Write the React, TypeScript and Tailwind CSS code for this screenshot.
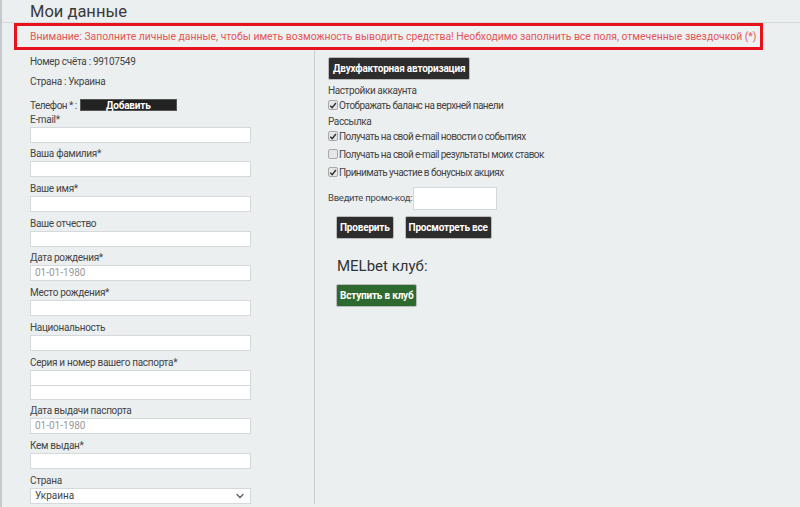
import React from 'react';

function Check({ on }: { on: boolean }) {
  return (
    <span className="mr-[1px] inline-flex h-[10px] w-[10px] shrink-0 items-center justify-center rounded-[2px] border border-[#a9a9a9] bg-[#e6e6e6]">
      {on && (
        <svg viewBox="0 0 10 10" className="h-[9px] w-[9px]">
          <path d="M1.5 5.2 L4 7.6 L8.6 1.8" fill="none" stroke="#333" strokeWidth="1.8" />
        </svg>
      )}
    </span>
  );
}

function Field({ label, placeholder, double }: { label: string; placeholder?: string; double?: boolean }) {
  return (
    <div className="mt-[4.7px]">
      <div className="h-[14px] text-[10px] leading-[14px] tracking-[-0.3px] text-[#444]">{label}</div>
      <div className="h-[16px] w-[221px] border border-[#d6d9db] bg-white pl-[4px] text-[10px] leading-[14px] text-[#999]">
        {placeholder}
      </div>
      {double && <div className="h-[14px] w-[221px] border border-t-0 border-[#d6d9db] bg-white" />}
    </div>
  );
}

function DarkBtn({ children, className }: { children: React.ReactNode; className?: string }) {
  return (
    <div className={`flex h-[23px] items-center rounded-[2px] border border-[#bbb] bg-[#2d2d2d] px-[3px] text-[10px] font-bold tracking-[-0.2px] text-white ${className ?? ''}`}>
      {children}
    </div>
  );
}

const row = 'flex h-[14px] items-center text-[10px] tracking-[-0.55px] text-[#444]';

export default function App() {
  return (
    <div className="h-[507px] w-[800px] overflow-hidden border-l-2 border-[#c3c9cd] bg-[#ebeff0] font-['Roboto','Liberation_Sans',sans-serif]">
      <div className="h-[23px] border-b border-[#d5d9dc] pl-[28px] pt-[1px] text-[16.5px] leading-[22px] text-[#3a3a3a]">Мои данные</div>
      <div className="ml-[12px] flex h-[27px] w-[749px] items-center whitespace-nowrap border-[3px] border-[#e8121c] bg-[#eef1f2] pl-[13px] text-[10.4px] text-[#e25757]">
        Внимание: Заполните личные данные, чтобы иметь возможность выводить средства! Необходимо заполнить все поля, отмеченные звездочкой (*)
      </div>
      <div className="flex">
        <div className="w-[313px] border-r border-[#c8cdd0] pl-[28px] pt-[5px]">
          <div className="h-[14px] text-[10px] leading-[14px] tracking-[-0.3px] text-[#444]">Номер счёта : 99107549</div>
          <div className="mt-[6px] h-[14px] text-[10px] leading-[14px] tracking-[-0.3px] text-[#444]">Страна : Украина</div>
          <div className="mt-[9px] flex h-[14px] items-center text-[10px] tracking-[-0.5px] text-[#444]">
            <span>Телефон * :</span>
            <span className="ml-[3px] flex h-[12px] w-[97px] items-center justify-center border border-[#555] bg-[#222] text-[10px] font-bold tracking-[-0.2px] text-white">
              Добавить
            </span>
          </div>
          <div className="-mt-[4px]">
            <Field label="E-mail*" />
          </div>
          <Field label="Ваша фамилия*" />
          <Field label="Ваше имя*" />
          <Field label="Ваше отчество" />
          <Field label="Дата рождения*" placeholder="01-01-1980" />
          <Field label="Место рождения*" />
          <Field label="Национальность" />
          <Field label="Серия и номер вашего паспорта*" double />
          <Field label="Дата выдачи паспорта" placeholder="01-01-1980" />
          <Field label="Кем выдан*" />
          <div className="mt-[4.7px]">
            <div className="h-[14px] text-[10px] leading-[14px] tracking-[-0.3px] text-[#444]">Страна</div>
            <div className="flex h-[16px] w-[221px] items-center justify-between border border-[#d6d9db] bg-white pl-[4px] pr-[5px] text-[10px] text-[#444]">
              <span>Украина</span>
              <svg viewBox="0 0 12 8" className="h-[6px] w-[10px]">
                <path d="M1.5 1.5 L6 6 L10.5 1.5" fill="none" stroke="#555" strokeWidth="1.8" />
              </svg>
            </div>
          </div>
        </div>
        <div className="pl-[13px] pt-[7px]">
          <DarkBtn className="w-fit px-[4px]">Двухфакторная авторизация</DarkBtn>
          <div className="mt-[4px] h-[14px] text-[10px] leading-[14px] tracking-[-0.4px] text-[#444]">Настройки аккаунта</div>
          <div className={row}>
            <Check on />
            Отображать баланс на верхней панели
          </div>
          <div className="mt-[3px] h-[14px] text-[10px] leading-[14px] tracking-[-0.4px] text-[#444]">Рассылка</div>
          <div className={row}>
            <Check on />
            Получать на свой e-mail новости о событиях
          </div>
          <div className={`mt-[4px] ${row}`}>
            <Check on={false} />
            Получать на свой e-mail результаты моих ставок
          </div>
          <div className={`mt-[4px] ${row}`}>
            <Check on />
            Принимать участие в бонусных акциях
          </div>
          <div className="mt-[8px] flex items-center text-[9.5px] tracking-[-0.25px] text-[#444]">
            <span>Введите промо-код:</span>
            <span className="ml-[1px] h-[23px] w-[84px] border border-[#d6d9db] bg-white" />
          </div>
          <div className="ml-[8px] mt-[6px] flex gap-[11px]">
            <DarkBtn>Проверить</DarkBtn>
            <DarkBtn>Просмотреть все</DarkBtn>
          </div>
          <div className="ml-[9px] mt-[18px] text-[15px] leading-[18px] text-[#333]">MELbet клуб:</div>
          <div className="ml-[8px] mt-[9px] flex h-[23px] w-fit items-center rounded-[2px] border border-[#bbb] bg-[#2e6a2f] px-[3px] text-[10px] font-bold tracking-[-0.2px] text-white">
            Вступить в клуб
          </div>
        </div>
      </div>
    </div>
  );
}
